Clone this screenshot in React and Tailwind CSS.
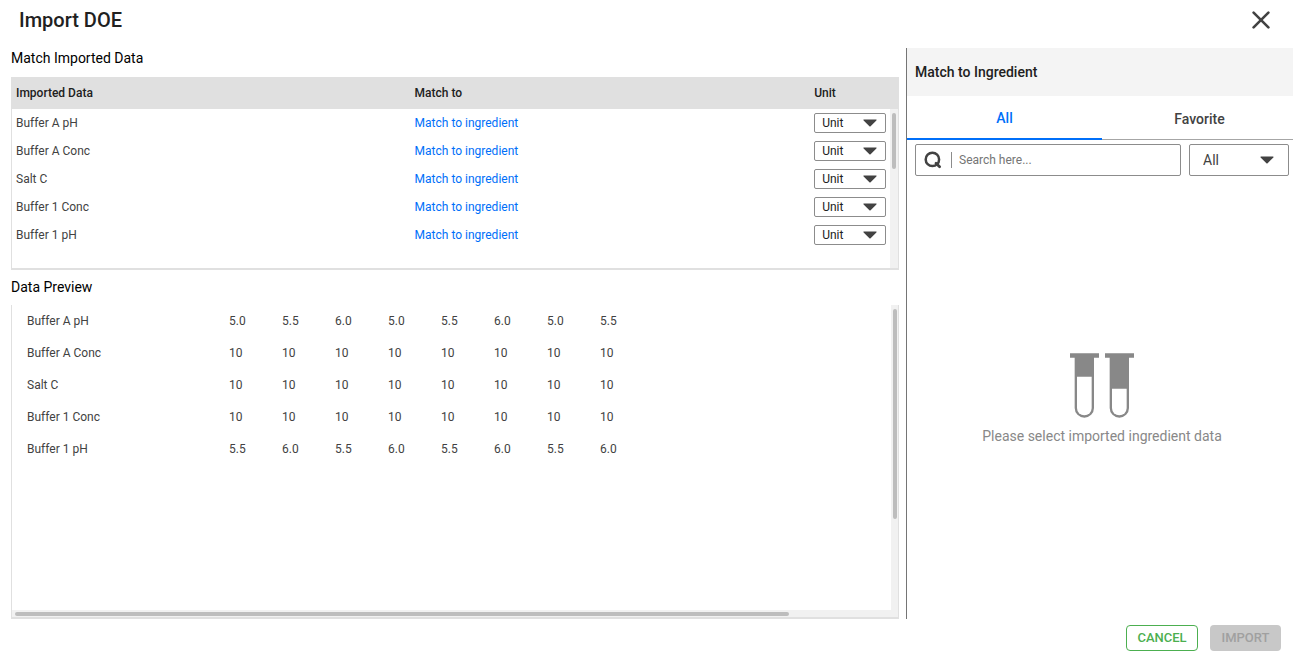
import React, { useState } from 'react';

const UNITS = ['Unit', 'mM', 'M', '%', 'mg/ml'];

const importedRows = [
  { name: 'Buffer A pH', values: ['5.0', '5.5', '6.0', '5.0', '5.5', '6.0', '5.0', '5.5'] },
  { name: 'Buffer A Conc', values: ['10', '10', '10', '10', '10', '10', '10', '10'] },
  { name: 'Salt C', values: ['10', '10', '10', '10', '10', '10', '10', '10'] },
  { name: 'Buffer 1 Conc', values: ['10', '10', '10', '10', '10', '10', '10', '10'] },
  { name: 'Buffer 1 pH', values: ['5.5', '6.0', '5.5', '6.0', '5.5', '6.0', '5.5', '6.0'] },
];

const CloseIcon = () => (
  <svg width="18" height="18" viewBox="0 0 18 18" fill="none" stroke="#424242" strokeWidth="2.6" strokeLinecap="round">
    <path d="M1.6 1.6 16.4 16.4M16.4 1.6 1.6 16.4" />
  </svg>
);

const SearchIcon = () => (
  <svg width="18" height="18" viewBox="0 0 18 18" fill="none" stroke="#424242" strokeLinecap="round">
    <circle cx="8.4" cy="8.4" r="6.7" strokeWidth="2.5" />
    <path d="M12 12.2 15.6 15.8" strokeWidth="2.8" />
  </svg>
);

const Caret = () => (
  <svg
    className="pointer-events-none absolute inset-y-0 right-[9px] my-auto"
    width="14"
    height="8"
    viewBox="0 0 14 8"
    fill="#424242"
  >
    <path d="M1 .5h12c.6 0 .8.5.4.9L7.6 7.2c-.4.4-.8.4-1.2 0L.6 1.4C.2 1 .4.5 1 .5z" />
  </svg>
);

const TubesIcon = () => (
  <svg width="64" height="65" viewBox="0 0 192 195">
    <g fill="#888888">
      <path d="M0 1h87v13H72v151a29 29 0 0 1-58 0V14H0z" />
      <path d="M105 1h87v13h-15v151a29 29 0 0 1-58 0V14h-14z" />
    </g>
    <g fill="#ffffff">
      <path d="M21 71h44v94a22 22 0 0 1-44 0z" />
      <path d="M126 107h44v58a22 22 0 0 1-44 0z" />
    </g>
  </svg>
);

const MatchTable = () => {
  const [units, setUnits] = useState(importedRows.map(() => 'Unit'));

  const changeUnit = (index, value) => {
    setUnits((prev) => prev.map((unit, i) => (i === index ? value : unit)));
  };

  return (
    <div className="relative min-h-[193px] border-b-2 border-[#e0e0e0]">
      <div className="absolute inset-x-0 top-8 bottom-0 border-x border-[#e0e0e0]">
        <div className="ml-auto h-full w-2 bg-[#f1f1f1] px-0.5 pt-1">
          <div className="h-14 w-1 rounded-full bg-[#bdbdbd]" />
        </div>
      </div>
      <table className="relative w-full table-fixed text-left text-xs">
        <thead>
          <tr className="h-8 bg-[#e0e0e0] text-[#212121]">
            <th className="w-[45%] py-0 pl-[5px] font-medium">Imported Data</th>
            <th className="w-[45%] py-0 pl-1 font-medium">Match to</th>
            <th className="py-0 pl-1 font-medium">Unit</th>
          </tr>
        </thead>
        <tbody>
          {importedRows.map((row, index) => (
            <tr key={row.name} className="h-7 text-[#424242]">
              <td className="py-0 pl-[5px]">{row.name}</td>
              <td className="py-0 pl-1">
                <a href="#ingredient" className="text-[#006ff9]">Match to ingredient</a>
              </td>
              <td className="py-0 pl-1">
                <div className="relative h-5 w-[72px]">
                  <select
                    aria-label={`${row.name} unit`}
                    value={units[index]}
                    onChange={(e) => changeUnit(index, e.target.value)}
                    className="block h-5 w-full appearance-none rounded-xs border border-[#8c8c8c] bg-white pl-[7px] text-[#212121]"
                  >
                    {UNITS.map((unit) => (
                      <option key={unit}>{unit}</option>
                    ))}
                  </select>
                  <Caret />
                </div>
              </td>
            </tr>
          ))}
        </tbody>
      </table>
    </div>
  );
};

const PreviewTable = () => (
  <div className="flex flex-1 flex-col border-x border-b-2 border-[#e0e0e0]">
    <div className="flex flex-1">
      <div className="flex-1">
        <table className="table-fixed text-left text-xs text-[#424242]">
          <tbody>
            {importedRows.map((row) => (
              <tr key={row.name} className="h-8">
                <th className="w-[217px] py-0 pl-[15px] font-normal">{row.name}</th>
                {row.values.map((value, i) => (
                  <td key={i} className="w-[53px] p-0">{value}</td>
                ))}
              </tr>
            ))}
          </tbody>
        </table>
      </div>
      <div className="w-[7px] bg-[#f1f1f1] px-0.5 pt-1">
        <div className="h-[210px] w-1 rounded-full bg-[#bdbdbd]" />
      </div>
    </div>
    <div className="h-[7px] bg-[#f1f1f1] px-[3px] pt-0.5">
      <div className="h-1 w-[88%] rounded-full bg-[#bdbdbd]" />
    </div>
  </div>
);

const IngredientPanel = () => {
  const [tab, setTab] = useState('all');
  const [search, setSearch] = useState('');

  const tabClass = (name) =>
    tab === name
      ? 'border-b-2 border-[#006ff9] text-[#006ff9]'
      : 'border-b border-[#a6a6a6] text-[#424242]';

  return (
    <aside className="flex w-[387px] flex-col border-l border-[#757575]">
      <h2 className="flex h-12 items-center bg-[#f4f4f4] pl-2 text-sm font-medium text-[#212121]">
        Match to Ingredient
      </h2>
      <div role="tablist" className="flex h-11 text-sm font-medium">
        <button
          role="tab"
          aria-selected={tab === 'all'}
          onClick={() => setTab('all')}
          className={`w-[195px] pt-0.5 ${tabClass('all')}`}
        >
          All
        </button>
        <button
          role="tab"
          aria-selected={tab === 'favorite'}
          onClick={() => setTab('favorite')}
          className={`flex-1 pt-0.5 pl-1 ${tabClass('favorite')}`}
        >
          Favorite
        </button>
      </div>
      <div className="flex gap-2 pt-1 pr-1 pl-2">
        <label className="flex h-8 flex-1 items-center rounded-xs border border-[#8c8c8c] pl-2">
          <SearchIcon />
          <span className="ml-[9px] h-4 border-l border-[#8c8c8c]" />
          <input
            type="text"
            aria-label="Search ingredients"
            placeholder="Search here..."
            value={search}
            onChange={(e) => setSearch(e.target.value)}
            className="min-w-0 flex-1 pl-[7px] text-xs outline-none placeholder:text-[#757575]"
          />
        </label>
        <div className="relative w-[100px]">
          <select
            aria-label="Ingredient type"
            className="block h-8 w-full appearance-none rounded-xs border border-[#8c8c8c] bg-white pl-[13px] text-sm text-[#424242]"
          >
            <option>All</option>
            <option>Buffer</option>
            <option>Salt</option>
          </select>
          <div className="pointer-events-none absolute inset-y-0 right-[6px] w-5">
            <Caret />
          </div>
        </div>
      </div>
      <div className="flex flex-1 flex-col items-center justify-center gap-2 pt-1 pl-1 text-sm text-[#888888]">
        <TubesIcon />
        <p>Please select imported ingredient data</p>
      </div>
    </aside>
  );
};

export default function App() {
  return (
    <div className="flex min-h-screen flex-col bg-white font-[Roboto,sans-serif]">
      <header className="flex h-12 items-start justify-between pt-[6px] pr-[23px] pl-[19px]">
        <h1 className="text-xl leading-7 font-medium text-[#212121]">Import DOE</h1>
        <button aria-label="Close" className="pt-[5px]">
          <CloseIcon />
        </button>
      </header>

      <main className="flex flex-1">
        <section className="flex flex-1 flex-col pr-[7px] pl-[11px] text-black">
          <h2 className="h-[29px] text-sm">Match Imported Data</h2>
          <MatchTable />
          <h2 className="h-[35px] pt-[7px] text-sm">Data Preview</h2>
          <PreviewTable />
        </section>
        <IngredientPanel />
      </main>

      <footer className="flex justify-end gap-3 pt-[6px] pr-3 pb-1 text-[13px] font-medium">
        <button className="h-[26px] w-[72px] rounded-sm border border-[#4caf50] text-[#4caf50]">CANCEL</button>
        <button disabled className="h-[26px] w-[71px] rounded-sm bg-[#c8c8c8] text-[#a0a0a0]">IMPORT</button>
      </footer>
    </div>
  );
}
